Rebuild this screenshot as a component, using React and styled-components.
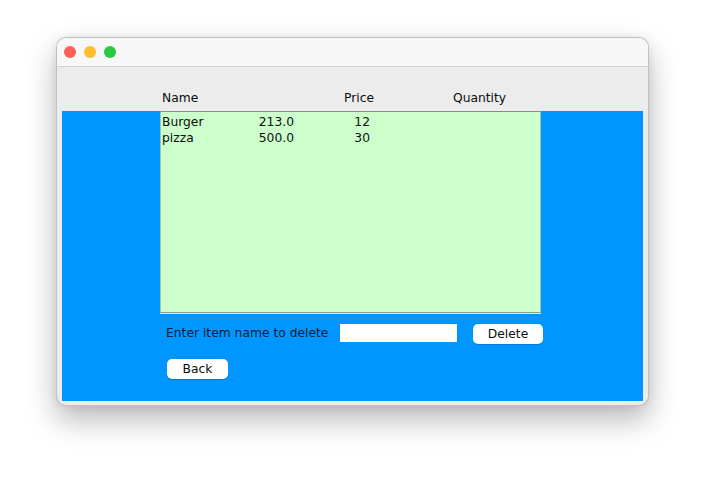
import React from 'react';
import styled, { createGlobalStyle } from 'styled-components';

const GlobalStyle = createGlobalStyle`
  html, body {
    margin: 0;
    padding: 0;
    background: #ffffff;
  }
  body {
    font-family: "DejaVu Sans", "Liberation Sans", sans-serif;
    font-size: 12.3px;
  }
`;

const Page = styled.div`
  width: 705px;
  height: 481px;
  padding: 37px 0 0 56px;
  box-sizing: border-box;
`;

const Window = styled.div`
  width: 593px;
  height: 369px;
  border-radius: 10px;
  overflow: hidden;
  background: #ececec;
  border: 1px solid rgba(0, 0, 0, 0.18);
  box-sizing: border-box;
  box-shadow: 0 14px 30px rgba(0, 0, 0, 0.28), 0 0 8px rgba(0, 0, 0, 0.08);
  display: flex;
  flex-direction: column;
`;

const TitleBar = styled.div`
  height: 28px;
  flex: none;
  background: #f7f7f7;
  border-bottom: 1px solid #d2d2d2;
  display: flex;
  align-items: center;
  gap: 8px;
  padding-left: 7px;
`;

const Light = styled.span`
  width: 12px;
  height: 12px;
  border-radius: 50%;
  background: ${(p) => p.color};
`;

const Content = styled.div`
  flex: 1;
  display: flex;
  flex-direction: column;
  padding: 0 5px 4px;
`;

const HeaderRow = styled.div`
  height: 44px;
  flex: none;
  display: grid;
  grid-template-columns: 182px 109px auto;
  align-items: end;
  padding: 0 0 6px 100px;
  box-sizing: border-box;
  color: #0d0d0d;
`;

const BluePanel = styled.div`
  flex: 1;
  background: #0096ff;
  display: flex;
  flex-direction: column;
  padding-left: 98px;
`;

const TextArea = styled.div`
  width: 381px;
  height: 202px;
  box-sizing: border-box;
  background: #ccffcc;
  border-top: 1px solid #8a8a8a;
  border-left: 1px solid #a9bfa9;
  border-right: 1px solid #a9bfa9;
  border-bottom: 1px solid #8a9c8a;
  box-shadow: 0 1px 0 #d8ecf8;
  padding: 2px 0 0 1px;
  color: #0d0d0d;
`;

const DataRow = styled.div`
  display: grid;
  grid-template-columns: 90px 42px 76px;
  height: 16px;
  line-height: 16px;
`;

const Cell = styled.span`
  text-align: ${(p) => (p.right ? 'right' : 'left')};
`;

const DeleteRow = styled.div`
  display: flex;
  align-items: flex-start;
  margin-top: 11px;
  padding-left: 6px;
  height: 20px;
`;

const Label = styled.span`
  color: #0b1a33;
  width: 174px;
  line-height: 19px;
`;

const Field = styled.div`
  width: 117px;
  height: 18px;
  background: #ffffff;
  margin-right: 16px;
`;

const Button = styled.button`
  width: ${(p) => p.w}px;
  height: 20px;
  background: #ffffff;
  border: none;
  border-radius: 5px;
  font-family: inherit;
  font-size: 12.3px;
  color: #0d0d0d;
  padding: 0;
  box-shadow: 0 0.5px 1px rgba(0, 0, 0, 0.2);
`;

const BackRow = styled.div`
  display: flex;
  margin-top: 15px;
  padding-left: 7px;
`;

const items = [
  { name: 'Burger', price: '213.0', qty: '12' },
  { name: 'pizza', price: '500.0', qty: '30' },
];

export default function App() {
  return (
    <>
      <GlobalStyle />
      <Page>
        <Window>
          <TitleBar>
            <Light color="#fe5f57" />
            <Light color="#febc2e" />
            <Light color="#28c840" />
          </TitleBar>
          <Content>
            <HeaderRow>
              <span>Name</span>
              <span>Price</span>
              <span>Quantity</span>
            </HeaderRow>
            <BluePanel>
              <TextArea>
                {items.map((it) => (
                  <DataRow key={it.name}>
                    <Cell>{it.name}</Cell>
                    <Cell right>{it.price}</Cell>
                    <Cell right>{it.qty}</Cell>
                  </DataRow>
                ))}
              </TextArea>
              <DeleteRow>
                <Label>Enter item name to delete</Label>
                <Field />
                <Button w={70}>Delete</Button>
              </DeleteRow>
              <BackRow>
                <Button w={61}>Back</Button>
              </BackRow>
            </BluePanel>
          </Content>
        </Window>
      </Page>
    </>
  );
}
